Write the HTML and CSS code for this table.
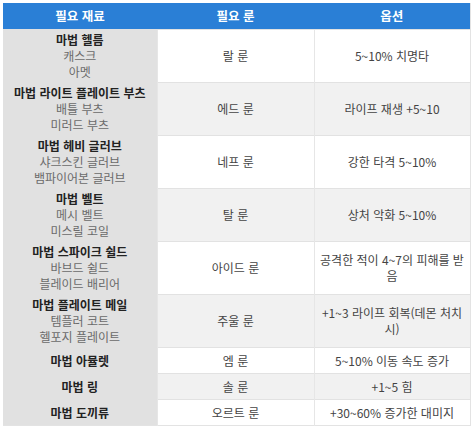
FILE: index.html
```html
<!DOCTYPE html>
<html lang="ko">
<head>
<meta charset="utf-8">
<link rel="stylesheet" href="styles.css">
</head>
<body>
<table class="runes">
  <colgroup>
    <col class="c1"><col class="c2"><col class="c3">
  </colgroup>
  <thead>
    <tr><th>필요 재료</th><th>필요 룬</th><th>옵션</th></tr>
  </thead>
  <tbody>
    <tr class="tall">
      <td class="mat"><b>마법 헬름</b><span>캐스크</span><span>아멧</span></td>
      <td>랄 룬</td><td>5~10% 치명타</td>
    </tr>
    <tr class="tall alt">
      <td class="mat"><b>마법 라이트 플레이트 부츠</b><span>배틀 부츠</span><span>미러드 부츠</span></td>
      <td>에드 룬</td><td>라이프 재생 +5~10</td>
    </tr>
    <tr class="tall">
      <td class="mat"><b>마법 헤비 글러브</b><span>샤크스킨 글러브</span><span>뱀파이어본 글러브</span></td>
      <td>네프 룬</td><td>강한 타격 5~10%</td>
    </tr>
    <tr class="tall alt">
      <td class="mat"><b>마법 벨트</b><span>메시 벨트</span><span>미스릴 코일</span></td>
      <td>탈 룬</td><td>상처 악화 5~10%</td>
    </tr>
    <tr class="tall">
      <td class="mat"><b>마법 스파이크 쉴드</b><span>바브드 쉴드</span><span>블레이드 배리어</span></td>
      <td>아이드 룬</td><td class="brk">공격한 적이 4~7의 피해를 받음</td>
    </tr>
    <tr class="tall alt">
      <td class="mat"><b>마법 플레이트 메일</b><span>템플러 코트</span><span>헬포지 플레이트</span></td>
      <td>주울 룬</td><td class="brk">+1~3 라이프 회복(데몬 처치 시)</td>
    </tr>
    <tr>
      <td class="mat"><b>마법 아뮬렛</b></td>
      <td>엠 룬</td><td>5~10% 이동 속도 증가</td>
    </tr>
    <tr class="alt">
      <td class="mat"><b>마법 링</b></td>
      <td>솔 룬</td><td>+1~5 힘</td>
    </tr>
    <tr>
      <td class="mat"><b>마법 도끼류</b></td>
      <td>오르트 룬</td><td>+30~60% 증가한 대미지</td>
    </tr>
  </tbody>
</table>
</body>
</html>
```

FILE: styles.css
```css
html, body {
  margin: 0;
  padding: 0;
  background: #ffffff;
}
body {
  padding: 3px 0 0 3px;
  font-family: "Noto Sans CJK KR", "Noto Sans", sans-serif;
  font-size: 12px;
  line-height: 16px;
  color: #444444;
}
.runes {
  width: 467px;
  border-collapse: collapse;
  table-layout: fixed;
  border-right: 1px solid #e3e3e3;
  border-bottom: 1px solid #e3e3e3;
}
.c1 { width: 154px; }
.c2 { width: 157px; }
.c3 { width: 156px; }
.runes th {
  background: #2a7fd6;
  color: #ffffff;
  font-weight: bold;
  font-size: 12.5px;
  height: 26px;
  padding: 0;
  text-align: center;
  vertical-align: middle;
}
.runes td {
  text-align: center;
  vertical-align: middle;
  padding: 0 6px;
  height: 25px;
  border-top: 1px solid #e2e2e2;
  border-left: 1px solid #e6e6e6;
  background: #ffffff;
}
.runes td.brk {
  word-break: break-all;
  padding: 0 5px;
}
.runes tr.tall td {
  height: 52px;
}
.runes tr.alt td {
  background: #f1f1f1;
}
.runes td.mat,
.runes tr.alt td.mat {
  background: #e1e1e1;
  border-left: none;
  border-top: 1px solid #e1e1e1;
}
.mat b {
  display: block;
  color: #222222;
  font-weight: bold;
}
.mat span {
  display: block;
  color: #6a6a6a;
}
```
